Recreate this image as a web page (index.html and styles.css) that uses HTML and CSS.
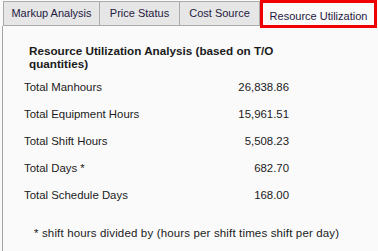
FILE: index.html
```html
<!DOCTYPE html>
<html>
<head>
<meta charset="utf-8">
<title>Resource Utilization</title>
<link rel="stylesheet" href="styles.css">
</head>
<body>
	<div id="main_page">
		<div class="tabs">
			<div class="tab tab_markup">Markup Analysis</div>
			<div class="tab tab_price">Price Status</div>
			<div class="tab tab_cost">Cost Source</div>
			<div class="tab tab_res active">Resource Utilization</div>
		</div>
		<div class="panel">
			<div class="panel_title">Resource Utilization Analysis (based on T/O quantities)</div>
			<div class="rows">
				<div class="row"><span>Total Manhours</span><b>26,838.86</b></div>
				<div class="row"><span>Total Equipment Hours</span><b>15,961.51</b></div>
				<div class="row"><span>Total Shift Hours</span><b>5,508.23</b></div>
				<div class="row"><span>Total Days *</span><b>682.70</b></div>
				<div class="row"><span>Total Schedule Days</span><b>168.00</b></div>
			</div>
			<p class="note">* shift hours divided by (hours per shift times shift per day)</p>
		</div>
	</div>
</body>
</html>
```

FILE: styles.css
```css
*{ padding:0; margin:0; box-sizing:border-box; }
html, body{width:100%; height:100%;}
body{background:#fafafa; font-family:"Liberation Sans", Arial, sans-serif; font-size:11px; color:#1b1b1b; overflow:hidden;}
#main_page{width:378px; height:251px; display:flex; flex-direction:column;}

.tabs{display:flex; padding:1px 0 0 3px; height:26px; flex:none;}
.tab{height:25px; line-height:23px; text-align:center; background:#e6e6e6; border:1px solid #ababab; border-left:none; color:#1f2040; white-space:nowrap;}
.tab_markup{width:97px; border-left:1px solid #ababab;}
.tab_price{width:80px;}
.tab_cost{width:80px;}
.tab_res{width:117px;}
.tab.active{background:#fafafa; border:3px solid #f00000; height:28px; margin-top:-1px; line-height:26px; position:relative; z-index:1;}

.panel{flex:1; margin-left:2px; border-left:1px solid #a3a3a3; background:#fafafa; padding:18px 0 0 21px;}
.panel_title{width:280px; margin-left:5px; font-weight:bold; font-size:11.7px; line-height:13px;}
.rows{width:265px; margin-top:4px; font-size:11.4px;}
.row{display:flex; justify-content:space-between; height:27px; line-height:27px;}
.row b{font-weight:normal;}
.note{margin:18px 0 0 10px; line-height:13px; font-size:11.5px; letter-spacing:0.15px;}
```
